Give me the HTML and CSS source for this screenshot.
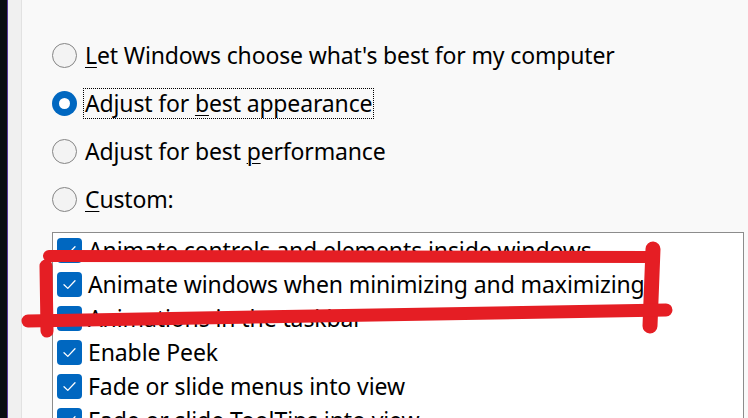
FILE: index.html
```html
<!DOCTYPE html>
<html lang="en">
<head>
<meta charset="utf-8">
<title>Performance Options</title>
<link rel="stylesheet" href="styles.css">
</head>
<body>
<div class="frame">
  <div class="edge-dark"></div>
  <div class="edge-accent"></div>
  <div class="edge-gray"></div>
  <div class="panel">
    <div class="options">
      <div class="opt"><span class="radio"></span><span class="label"><u>L</u>et Windows choose what's best for my computer</span></div>
      <div class="opt"><span class="radio on"></span><span class="label focus">Adjust for <u>b</u>est appearance</span></div>
      <div class="opt"><span class="radio"></span><span class="label">Adjust for best <u>p</u>erformance</span></div>
      <div class="opt"><span class="radio"></span><span class="label"><u>C</u>ustom:</span></div>
    </div>
    <div class="list">
      <div class="item"><span class="cb"><svg viewBox="0 0 25 25" width="25" height="25"><path d="M7 12.8 L10.8 16.4 L18 8.8" /></svg></span><span class="itext">Animate controls and elements inside windows</span></div>
      <div class="item"><span class="cb"><svg viewBox="0 0 25 25" width="25" height="25"><path d="M7 12.8 L10.8 16.4 L18 8.8" /></svg></span><span class="itext">Animate windows when minimizing and maximizing</span></div>
      <div class="item"><span class="cb"><svg viewBox="0 0 25 25" width="25" height="25"><path d="M7 12.8 L10.8 16.4 L18 8.8" /></svg></span><span class="itext">Animations in the taskbar</span></div>
      <div class="item"><span class="cb"><svg viewBox="0 0 25 25" width="25" height="25"><path d="M7 12.8 L10.8 16.4 L18 8.8" /></svg></span><span class="itext">Enable Peek</span></div>
      <div class="item"><span class="cb"><svg viewBox="0 0 25 25" width="25" height="25"><path d="M7 12.8 L10.8 16.4 L18 8.8" /></svg></span><span class="itext">Fade or slide menus into view</span></div>
      <div class="item"><span class="cb"><svg viewBox="0 0 25 25" width="25" height="25"><path d="M7 12.8 L10.8 16.4 L18 8.8" /></svg></span><span class="itext">Fade or slide ToolTips into view</span></div>
    </div>
  </div>
</div>
<svg class="annot" viewBox="0 0 748 418" width="748" height="418">
  <path class="mark" d="M49 256 L650 257" stroke-width="12"/>
  <path class="mark" d="M653 249 L650 326" stroke-width="15"/>
  <path class="mark" d="M28 321 L666 310" stroke-width="13"/>
  <path class="mark" d="M46 266 L47 331" stroke-width="13"/>
</svg>
</body>
</html>
```
FILE: styles.css
```css
html, body {
  margin: 0;
  padding: 0;
}
body {
  width: 748px;
  height: 418px;
  overflow: hidden;
  position: relative;
  font-family: "Noto Sans", "DejaVu Sans", sans-serif;
  color: #000;
  background: #f9f9f9;
}
.frame {
  display: flex;
  height: 418px;
  overflow: hidden;
}
.edge-dark {
  width: 7px;
  background: #0b0e13;
}
.edge-accent {
  width: 1px;
  background: #5a3b9c;
}
.edge-gray {
  width: 13px;
  background: #f0f0f0;
  border-right: 1px solid #e2e2e2;
}
.panel {
  flex: 1;
  background: #f9f9f9;
  padding: 31px 4px 0 30px;
  display: flex;
  flex-direction: column;
}
.options {
  display: flex;
  flex-direction: column;
}
.opt {
  height: 48px;
  display: flex;
  align-items: center;
}
.radio {
  box-sizing: border-box;
  width: 25px;
  height: 25px;
  border-radius: 50%;
  border: 1.5px solid #858585;
  background: #f3f3f3;
  margin-right: 6px;
  flex: none;
  display: flex;
  align-items: center;
  justify-content: center;
}
.radio.on {
  border: none;
  background: #0067c0;
}
.radio.on::after {
  content: "";
  width: 11px;
  height: 11px;
  border-radius: 50%;
  background: #fff;
}
.label {
  font-size: 23px;
  letter-spacing: -0.15px;
  line-height: 29px;
  padding: 0 1px;
  border: 1px solid transparent;
  white-space: nowrap;
}
.label.focus {
  border: 1px dotted #000;
}
.label u {
  text-decoration-thickness: 1px;
  text-underline-offset: 3px;
}
.list {
  margin-top: 9px;
  height: 260px;
  background: #fff;
  border: 1px solid #8c8c8c;
  flex: none;
}
.item {
  height: 34px;
  display: flex;
  align-items: center;
  padding-left: 4px;
}
.cb {
  width: 25px;
  height: 25px;
  border-radius: 4px;
  background: #0067c0;
  flex: none;
  margin-right: 6px;
  display: flex;
}
.cb svg path {
  fill: none;
  stroke: #fff;
  stroke-width: 1.3;
  stroke-linecap: round;
  stroke-linejoin: round;
}
.itext {
  font-size: 23px;
  letter-spacing: -0.1px;
  white-space: nowrap;
}
.annot {
  position: absolute;
  left: 0;
  top: 0;
  pointer-events: none;
}
.mark {
  fill: none;
  stroke: #e51e24;
  stroke-linecap: round;
}
```
